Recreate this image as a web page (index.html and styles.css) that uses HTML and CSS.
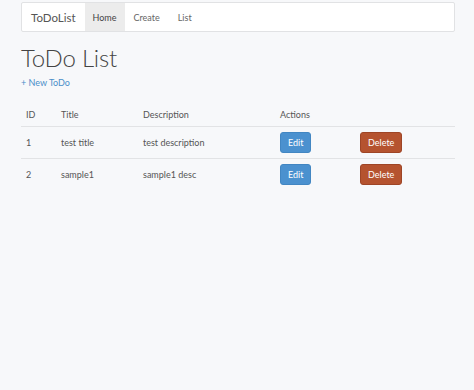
FILE: index.html
```html
<!DOCTYPE html>
<html lang="en">
<head>
    <meta charset="UTF-8">
    <meta name="viewport" content="width=device-width, initial-scale=1.0">
    <title>ToDoList</title>
    <link rel="stylesheet" href="styles.css">
</head>
<body>
    <div class="container">
        <nav class="navbar">
            <a class="brand" href="#">ToDoList</a>
            <ul class="nav">
                <li class="active"><a href="#">Home</a></li>
                <li><a href="#">Create</a></li>
                <li><a href="#">List</a></li>
            </ul>
        </nav>

        <h1>ToDo List</h1>
        <a class="new-link" href="#">+ New ToDo</a>

        <table class="todo-table">
            <thead>
                <tr>
                    <th class="col-id">ID</th>
                    <th class="col-title">Title</th>
                    <th class="col-desc">Description</th>
                    <th class="col-edit">Actions</th>
                    <th></th>
                </tr>
            </thead>
            <tbody>
                <tr>
                    <td>1</td>
                    <td>test title</td>
                    <td>test description</td>
                    <td><button class="btn btn-edit">Edit</button></td>
                    <td><button class="btn btn-delete">Delete</button></td>
                </tr>
                <tr>
                    <td>2</td>
                    <td>sample1</td>
                    <td>sample1 desc</td>
                    <td><button class="btn btn-edit">Edit</button></td>
                    <td><button class="btn btn-delete">Delete</button></td>
                </tr>
            </tbody>
        </table>
    </div>
</body>
</html>
```

FILE: styles.css
```css
html, body {
    height: 100%;
}

body {
    font-family: Lato, 'Open Sans', sans-serif;
    color: #555;
    background-color: #f7f8fa;
    margin: 0;
    padding: 0;
}

.container {
    width: 434px;
    padding: 2px 0 0 21px;
}

a {
    text-decoration: none;
}

/* Navbar */
.navbar {
    display: flex;
    align-items: stretch;
    height: 30px;
    background-color: #fff;
    border: 1px solid #e1e2e4;
    border-radius: 2px;
    box-sizing: border-box;
}

.brand {
    display: flex;
    align-items: center;
    padding: 0 9px;
    font-size: 11.5px;
    color: #555;
}

.nav {
    display: flex;
    list-style: none;
    margin: 0;
    padding: 0;
}

.nav li a {
    display: flex;
    align-items: center;
    height: 100%;
    padding: 0 9px;
    font-size: 9px;
    color: #666;
}

.nav li.active a {
    background-color: #ececec;
    color: #444;
    padding: 0 8px;
}

/* Heading */
h1 {
    font-size: 24px;
    font-weight: 300;
    letter-spacing: -0.2px;
    line-height: 1.1;
    color: #444;
    margin: 13px 0 5px;
}

.new-link {
    display: block;
    font-size: 9px;
    line-height: 14px;
    color: #4a8ec9;
}

/* Table */
.todo-table {
    width: 434px;
    border-collapse: collapse;
    margin-top: 12px;
    font-size: 9px;
}

.todo-table th {
    text-align: left;
    font-weight: 400;
    line-height: 14px;
    padding: 6px 5px 4px;
    border-bottom: 1px solid #e2e3e5;
}

.col-id { width: 25px; }
.col-title { width: 72px; }
.col-desc { width: 127px; }
.col-edit { width: 70px; }

.todo-table td {
    padding: 5px 5px;
    line-height: 14px;
    vertical-align: middle;
}

.todo-table tbody tr + tr td {
    border-top: 1px solid #e2e3e5;
}

.btn {
    height: 21px;
    padding: 0 7px;
    font-family: inherit;
    font-size: 9px;
    color: #fff;
    border-radius: 3px;
    cursor: pointer;
}

.btn-edit {
    background-color: #4b91cf;
    border: 1px solid #4286c2;
}

.btn-delete {
    background-color: #b5532f;
    border: 1px solid #9e4526;
}
```
